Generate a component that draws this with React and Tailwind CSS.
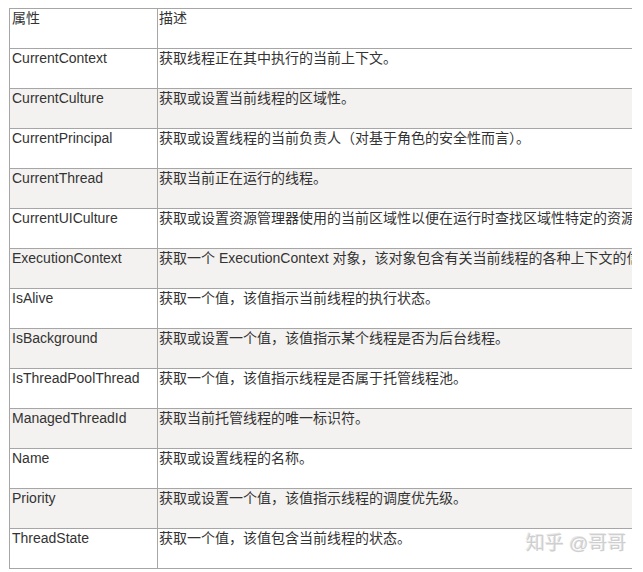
const rows = [
  ["属性", "描述"],
  ["CurrentContext", "获取线程正在其中执行的当前上下文。"],
  ["CurrentCulture", "获取或设置当前线程的区域性。"],
  ["CurrentPrincipal", "获取或设置线程的当前负责人（对基于角色的安全性而言）。"],
  ["CurrentThread", "获取当前正在运行的线程。"],
  ["CurrentUICulture", "获取或设置资源管理器使用的当前区域性以便在运行时查找区域性特定的资源。"],
  ["ExecutionContext", "获取一个 ExecutionContext 对象，该对象包含有关当前线程的各种上下文的信息。"],
  ["IsAlive", "获取一个值，该值指示当前线程的执行状态。"],
  ["IsBackground", "获取或设置一个值，该值指示某个线程是否为后台线程。"],
  ["IsThreadPoolThread", "获取一个值，该值指示线程是否属于托管线程池。"],
  ["ManagedThreadId", "获取当前托管线程的唯一标识符。"],
  ["Name", "获取或设置线程的名称。"],
  ["Priority", "获取或设置一个值，该值指示线程的调度优先级。"],
  ["ThreadState", "获取一个值，该值包含当前线程的状态。"],
];

export default function App() {
  return (
    <div
      className="relative w-[643px] h-[572px] bg-white overflow-hidden text-[14px] leading-[18px] text-[#333333]"
      style={{ fontFamily: '"Liberation Sans", "Noto Sans CJK SC", sans-serif' }}
    >
      <div className="w-[632px] overflow-hidden pt-[8px] pl-[9px]">
        <div className="w-[900px] border-l border-t border-[#a6a6a6]">
          {rows.map((r, i) => (
            <div
              key={i}
              className={
                "flex h-[40px] border-b border-[#a6a6a6] " +
                (i % 2 === 0 && i > 0 ? "bg-[#f3f2f0]" : "bg-white")
              }
            >
              <div className="w-[148px] shrink-0 border-r border-[#a6a6a6] pl-[2px] whitespace-nowrap">
                {r[0]}
              </div>
              <div className="flex-1 pl-[1px] whitespace-nowrap">{r[1]}</div>
            </div>
          ))}
        </div>
      </div>
      <div
        className="absolute left-[526px] top-[532px] text-[19px] leading-[24px] text-[#cfcfcf] whitespace-nowrap"
        style={{ textShadow: "1px 1px 0 #ffffff, -1px -1px 0 #e8e8e8" }}
      >
        知乎 @哥哥
      </div>
    </div>
  );
}
